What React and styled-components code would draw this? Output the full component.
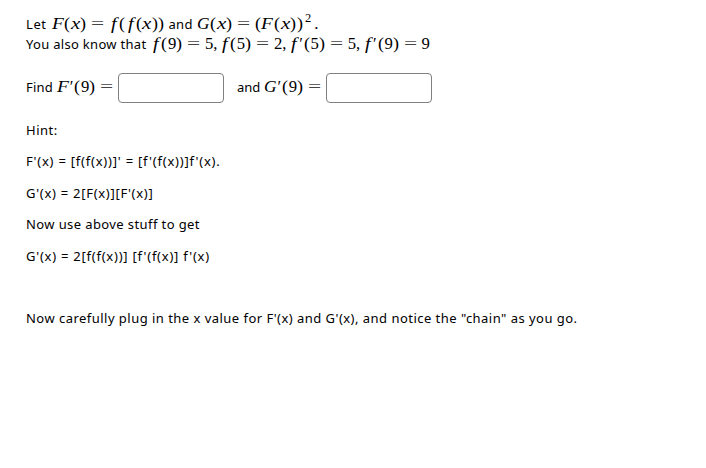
import styled, { createGlobalStyle } from "styled-components"

const GlobalStyle = createGlobalStyle`
  body {
    margin: 0;
    background: #fff;
    color: #000;
    font-family: "Noto Sans", sans-serif;
    font-size: 13px;
  }
`

const Page = styled.main`
  padding: 14px 26px;
`

const Line = styled.div`
  display: flex;
  align-items: baseline;
  height: ${({ $height }) => $height || 20}px;
  line-height: 20px;
  white-space: pre;
`

const Words = styled.span`
  letter-spacing: ${({ $spacing }) => $spacing || 0}px;
  margin-right: ${({ $gap }) => $gap || 0}px;
`

const AnswerRow = styled.div`
  display: flex;
  align-items: center;
  height: 30px;
  margin: 19px 0 17px;

  ${Line} {
    margin-top: -2px;
  }
`

const Answer = styled.input`
  box-sizing: border-box;
  width: 106px;
  height: 30px;
  padding: 4px;
  border: 1px solid #808080;
  border-radius: 4px;
  background: #fff;
  margin-right: ${({ $gap }) => $gap || 0}px;
`

const Hint = styled.p`
  margin: 0;
  height: ${({ $height }) => $height || 31.4}px;
  line-height: 20px;
  letter-spacing: ${({ $spacing }) => $spacing || 0}px;
  white-space: pre;
`

const Formula = styled.span`
  display: inline-flex;
  align-items: baseline;
  font-family: "Liberation Serif", serif;
  font-size: 16.7px;
  line-height: 20px;
`

const Glyph = styled.span`
  display: inline-block;
  flex: none;
  width: ${({ $width }) => $width}em;
  margin: 0 ${({ $margin }) => $margin || 0}em;
  color: ${({ $color }) => $color || "inherit"};
  font-style: ${({ $italic }) => ($italic ? "italic" : "normal")};
  text-indent: ${({ $indent }) => $indent || 0}em;
  transform: scaleX(${({ $stretch }) => $stretch || 1});
  transform-origin: left;
`

const Power = styled.sup`
  font-size: 12.5px;
  line-height: 0;
  vertical-align: baseline;
  transform: translateY(-7px);
  margin: 0 3px 0 2px;
`

// advance widths in em, with the relation space round "="
const glyphs = {
  F: { $width: 0.76, $italic: true, $stretch: 1.16 },
  G: { $width: 0.786, $italic: true, $stretch: 1.04 },
  f: { $width: 0.6, $italic: true, $stretch: 1.2, $indent: 0.1 },
  x: { $width: 0.572, $italic: true, $stretch: 1.25 },
  "(": { $width: 0.389, $stretch: 1.08 },
  ")": { $width: 0.389, $stretch: 1.08 },
  "=": { $width: 0.778, $stretch: 1.4, $margin: 0.278, $color: "#444" },
  ",": { $width: 0.42 },
  "′": { $width: 0.29 },
  ".": { $width: 0.278 },
}

const Tex = ({ children }) => (
  <Formula>
    {[...children].map((char, i) =>
      char === "²" ? (
        <Power key={i}>2</Power>
      ) : (
        <Glyph key={i} {...(glyphs[char] || { $width: 0.5 })}>{char}</Glyph>
      )
    )}
  </Formula>
)

const App = () => {
  return (
    <>
      <GlobalStyle />
      <Page>
        <Line>
          <Words $gap={5} $spacing={0.6}>Let</Words>
          <Tex>F(x)=f(f(x))</Tex>
          <Words $gap={4} $spacing={0.4}> and</Words>
          <Tex>G(x)=(F(x))².</Tex>
        </Line>
        <Line>
          <Words $gap={5} $spacing={0.3}>You also know that</Words>
          <Tex>f(9)=5,f(5)=2,f′(5)=5,f′(9)=9</Tex>
        </Line>
        <AnswerRow>
          <Line>
            <Words $gap={4} $spacing={0.2}>Find</Words>
            <Tex>F′(9)=</Tex>
          </Line>
          <Answer $gap={13} />
          <Line>
            <Words $gap={4}>and</Words>
            <Tex>G′(9)=</Tex>
          </Line>
          <Answer />
        </AnswerRow>
        <Hint $spacing={0.5}>Hint:</Hint>
        <Hint $spacing={0.78}>F'(x) = [f(f(x))]' = [f'(f(x))]f'(x).</Hint>
        <Hint $spacing={0.72}>G'(x) = 2[F(x)][F'(x)]</Hint>
        <Hint $spacing={0.4}>Now use above stuff to get</Hint>
        <Hint $height={62} $spacing={0.76}>G'(x) = 2[f(f(x))] [f'(f(x)] f'(x)</Hint>
        <Hint $spacing={0.47}>Now carefully plug in the x value for F'(x) and G'(x), and notice the "chain" as you go.</Hint>
      </Page>
    </>
  )
}

export default App
